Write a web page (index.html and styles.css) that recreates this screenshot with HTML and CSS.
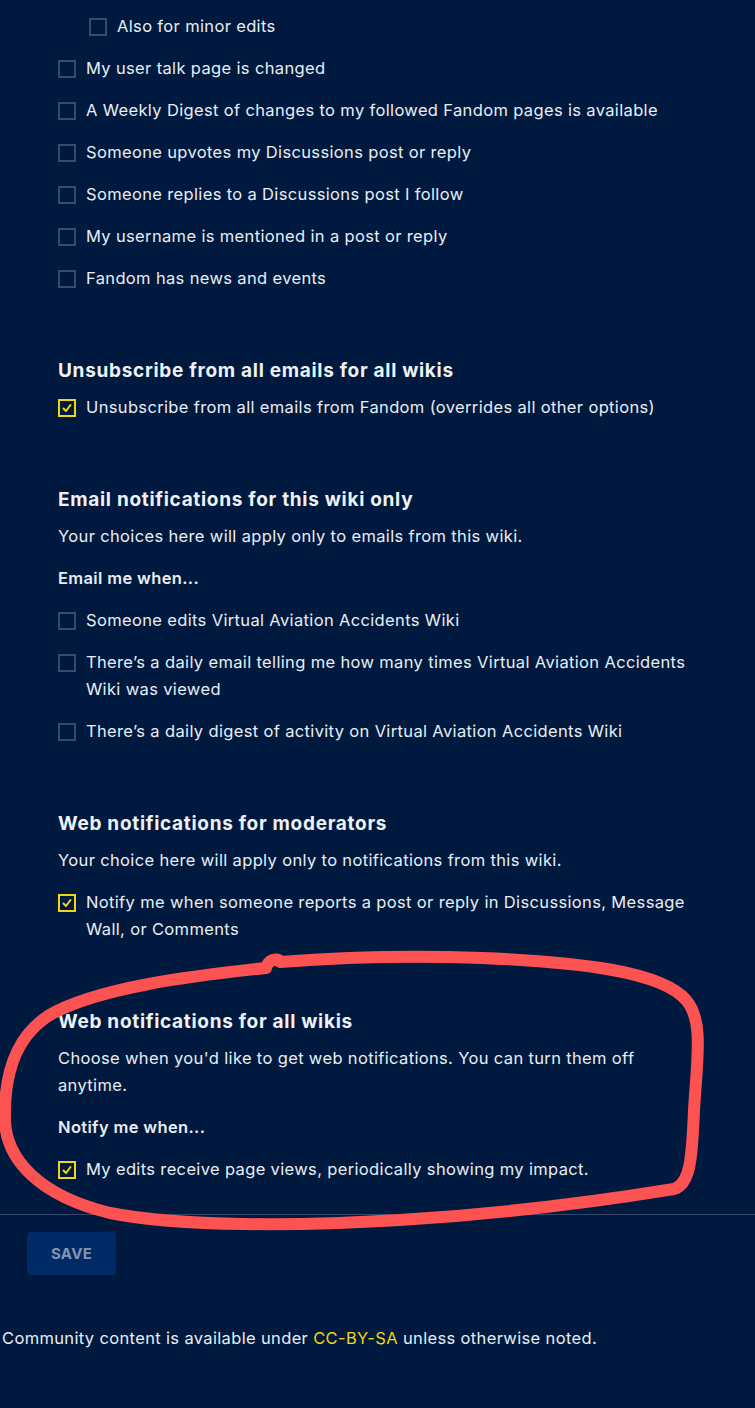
FILE: index.html
```html
<!DOCTYPE html>
<html lang="en">
<head>
<meta charset="utf-8">
<title>Preferences</title>
<link rel="stylesheet" href="styles.css">
</head>
<body>
<div class="page">
  <div class="prefs">
    <section class="section first">
      <ul class="opts">
        <li class="opt sub"><span class="box"></span><span class="lbl">Also for minor edits</span></li>
        <li class="opt"><span class="box"></span><span class="lbl">My user talk page is changed</span></li>
        <li class="opt"><span class="box"></span><span class="lbl">A Weekly Digest of changes to my followed Fandom pages is available</span></li>
        <li class="opt"><span class="box"></span><span class="lbl">Someone upvotes my Discussions post or reply</span></li>
        <li class="opt"><span class="box"></span><span class="lbl">Someone replies to a Discussions post I follow</span></li>
        <li class="opt"><span class="box"></span><span class="lbl">My username is mentioned in a post or reply</span></li>
        <li class="opt"><span class="box"></span><span class="lbl">Fandom has news and events</span></li>
      </ul>
    </section>

    <section class="section">
      <h2 class="head">Unsubscribe from all emails for all wikis</h2>
      <ul class="opts">
        <li class="opt"><span class="box on"><svg viewBox="0 0 14 14"><polyline points="3.5,7.5 6,10 10.5,4"/></svg></span><span class="lbl">Unsubscribe from all emails from Fandom (overrides all other options)</span></li>
      </ul>
    </section>

    <section class="section">
      <h2 class="head">Email notifications for this wiki only</h2>
      <p class="desc">Your choices here will apply only to emails from this wiki.</p>
      <p class="sub-head">Email me when...</p>
      <ul class="opts">
        <li class="opt"><span class="box"></span><span class="lbl">Someone edits Virtual Aviation Accidents Wiki</span></li>
        <li class="opt"><span class="box"></span><span class="lbl">There’s a daily email telling me how many times Virtual Aviation Accidents Wiki was viewed</span></li>
        <li class="opt"><span class="box"></span><span class="lbl">There’s a daily digest of activity on Virtual Aviation Accidents Wiki</span></li>
      </ul>
    </section>

    <section class="section">
      <h2 class="head">Web notifications for moderators</h2>
      <p class="desc">Your choice here will apply only to notifications from this wiki.</p>
      <ul class="opts">
        <li class="opt"><span class="box on"><svg viewBox="0 0 14 14"><polyline points="3.5,7.5 6,10 10.5,4"/></svg></span><span class="lbl">Notify me when someone reports a post or reply in Discussions, Message Wall, or Comments</span></li>
      </ul>
    </section>

    <section class="section">
      <h2 class="head">Web notifications for all wikis</h2>
      <p class="desc">Choose when you'd like to get web notifications. You can turn them off anytime.</p>
      <p class="sub-head">Notify me when...</p>
      <ul class="opts">
        <li class="opt"><span class="box on"><svg viewBox="0 0 14 14"><polyline points="3.5,7.5 6,10 10.5,4"/></svg></span><span class="lbl">My edits receive page views, periodically showing my impact.</span></li>
      </ul>
    </section>
  </div>

  <div class="actions">
    <button class="save" type="button">Save</button>
  </div>

  <footer class="footer">Community content is available under <a class="link" href="#">CC-BY-SA</a> unless otherwise noted.</footer>

  <svg class="annot" viewBox="0 0 755 1408" width="755" height="1408" aria-hidden="true">
    <path d="M 282 962 C 276 957, 268 960, 266 968 C 190 976, 95 988, 48 1016 C 12 1040, 4 1080, 5 1120 C 6 1160, 40 1196, 110 1213 C 180 1227, 300 1226, 400 1220 C 500 1214, 600 1201, 674 1189 C 690 1184, 692 1160, 694 1110 C 697 1060, 704 1020, 686 1000 C 662 972, 582 962, 482 958 C 402 955, 332 958, 280 962"/>
  </svg>
</div>
</body>
</html>
```

FILE: styles.css
```css
html, body {
  margin: 0;
  padding: 0;
  background: #001a3f;
}
body {
  color: #e9edf4;
  font-family: "Inter", "Noto Sans", "Liberation Sans", sans-serif;
  font-size: 16.5px;
  letter-spacing: 0.35px;
  line-height: 27px;
}
.page {
  position: relative;
  width: 755px;
  min-height: 1408px;
}
.prefs {
  padding: 13px 0 31px 58px;
  border-bottom: 1px solid #34476a;
}
.section {
  padding-top: 65px;
}
.section.first {
  padding-top: 0;
}
.opts {
  list-style: none;
  margin: 0;
  padding: 0;
  display: flex;
  flex-direction: column;
  gap: 15px;
}
.opt {
  display: flex;
  align-items: flex-start;
  gap: 10px;
  padding-right: 50px;
}
.opt.sub {
  padding-left: 31px;
}
.box {
  flex: none;
  box-sizing: border-box;
  width: 18px;
  height: 18px;
  margin-top: 5px;
  border: 2px solid #3a4b69;
  display: flex;
}
.box.on {
  border-color: #f4d214;
}
.box svg {
  width: 14px;
  height: 14px;
  fill: none;
  stroke: #f4d214;
  stroke-width: 2;
  stroke-linecap: round;
  stroke-linejoin: round;
}
.lbl {
  display: block;
}
.head {
  margin: 0 0 9px;
  font-size: 19px;
  font-weight: 700;
  letter-spacing: 0.7px;
  line-height: 28px;
  color: #eef1f6;
}
.desc {
  margin: 0 0 15px;
  padding-right: 60px;
}
.sub-head {
  margin: 0 0 15px;
  font-weight: 600;
}
.actions {
  padding: 17px 0 0 27px;
}
.save {
  width: 89px;
  height: 43px;
  border: 0;
  border-radius: 4px;
  background: #012b66;
  color: #8195b3;
  font-family: "Inter", "Liberation Sans", sans-serif;
  font-size: 15px;
  font-weight: 700;
  text-transform: uppercase;
  letter-spacing: 0.3px;
  cursor: default;
}
.footer {
  margin-top: 50px;
  padding-left: 2px;
}
.link {
  color: #f4d214;
  text-decoration: none;
}
.annot {
  position: absolute;
  left: 0;
  top: 0;
  pointer-events: none;
}
.annot path {
  fill: none;
  stroke: #fd5252;
  stroke-width: 12;
  stroke-linecap: round;
  stroke-linejoin: round;
}
```
